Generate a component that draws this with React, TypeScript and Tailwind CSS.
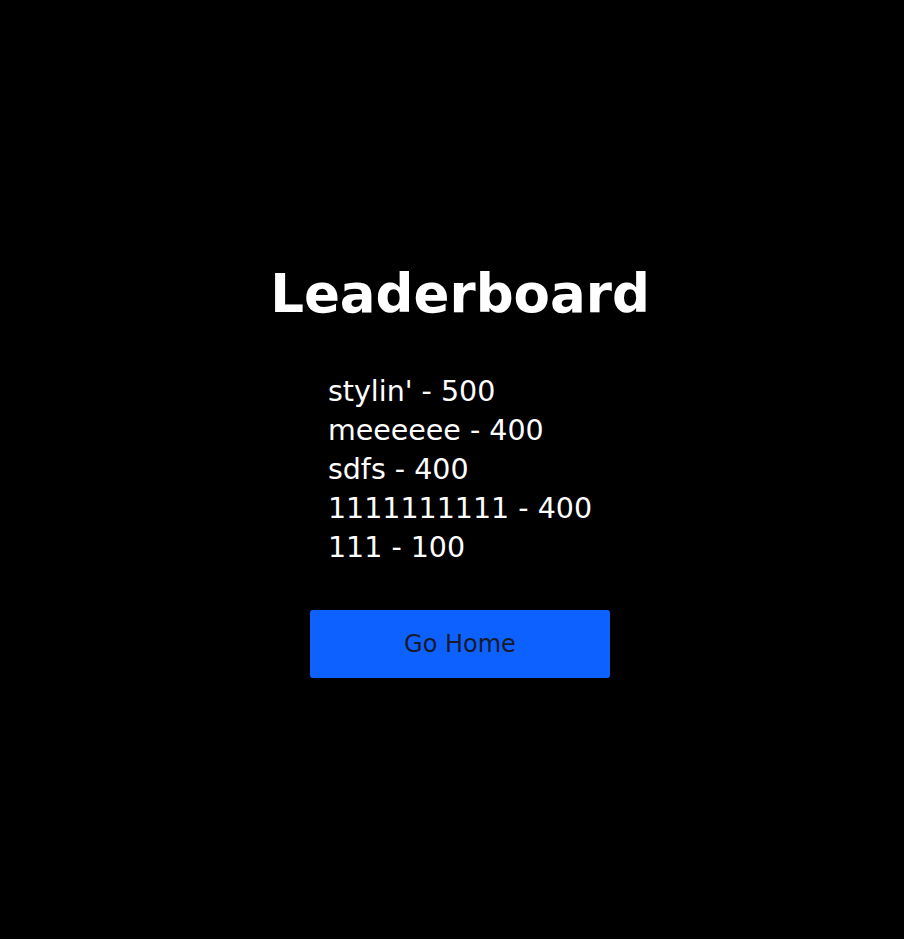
const scores = [
  { name: "stylin'", score: 500 },
  { name: "meeeeee", score: 400 },
  { name: "sdfs", score: 400 },
  { name: "1111111111", score: 400 },
  { name: "111", score: 100 },
];

export default function App() {
  return (
    <div className="flex min-h-screen flex-col items-center justify-center bg-black pl-[16px] font-['DejaVu_Sans',sans-serif] text-white">
      <h1 className="mt-[6px] text-[53px] font-bold leading-none">Leaderboard</h1>
      <ul className="mt-[52px] w-fit text-[28.5px] leading-[39px]">
        {scores.map((entry, i) => (
          <li key={i}>
            {entry.name} - {entry.score}
          </li>
        ))}
      </ul>
      <button className="mt-[43px] h-[68px] w-[300px] rounded-[3px] bg-[#0d62ff] text-[24px] text-[#1a1a2a]">
        Go Home
      </button>
    </div>
  );
}
